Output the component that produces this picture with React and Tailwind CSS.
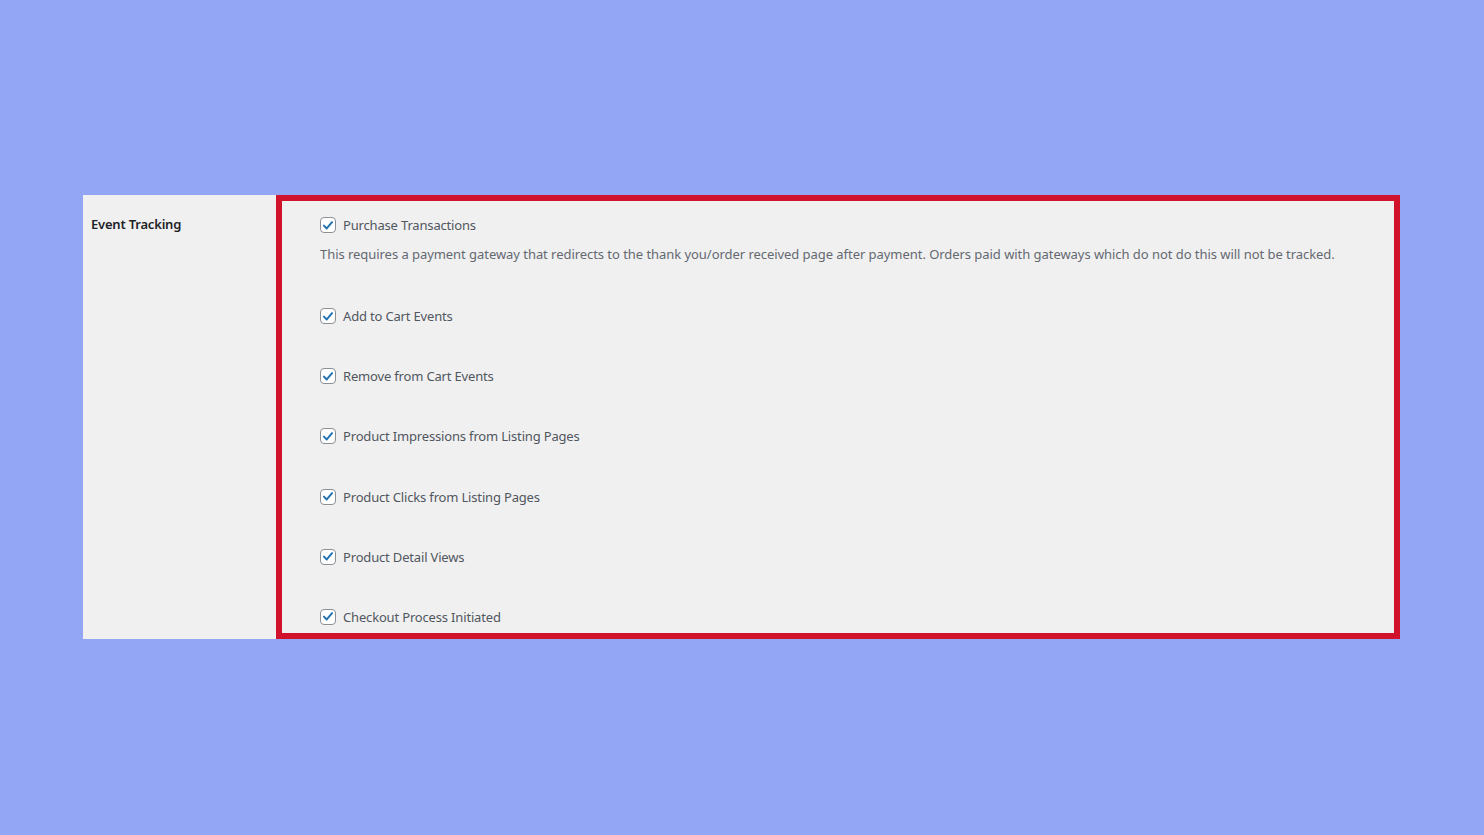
import React from 'react';

const events = [
  'Add to Cart Events',
  'Remove from Cart Events',
  'Product Impressions from Listing Pages',
  'Product Clicks from Listing Pages',
  'Product Detail Views',
  'Checkout Process Initiated',
];

const Check = () => (
  <span className="w-4 h-4 shrink-0 rounded-[4px] border border-[#8c8f94] bg-white flex items-center justify-center">
    <svg viewBox="0 0 20 20" className="w-[15px] h-[15px]">
      <path d="M4.2 10.2 L8.2 14.2 L15.8 5.2" fill="none" stroke="#2271b1" strokeWidth="2.8" strokeLinecap="round" strokeLinejoin="round" />
    </svg>
  </span>
);

const Row = ({ label }) => (
  <label className="flex items-center h-4 gap-[7px] text-[13px] tracking-[-0.17px] leading-5 text-[#50575e]">
    <Check />
    <span>{label}</span>
  </label>
);

export default function App() {
  return (
    <div className="min-h-[835px] bg-[#93a6f5] pt-[195px] pl-[83px]" style={{ fontFamily: '"Noto Sans", "Open Sans", sans-serif' }}>
      <div className="flex w-[1317px] h-[444px]">
        <div className="w-[193px] bg-[#f0f0f1] pl-2 pt-[19px]">
          <div className="text-[13px] tracking-[-0.2px] leading-5 font-semibold text-[#1d2327]">Event Tracking</div>
        </div>
        <div className="flex-1 bg-[#f0f0f1] border-[6px] border-[#d0132b] pl-[38px] pt-4">
          <Row label="Purchase Transactions" />
          <p className="mt-[11px] text-[13px] tracking-[-0.05px] leading-5 text-[#646970]">
            This requires a payment gateway that redirects to the thank you/order received page after payment. Orders paid with gateways which do not do this will not be tracked.
          </p>
          <div className="flex flex-col gap-[44.2px] mt-[44px]">
            {events.map((e) => (
              <Row key={e} label={e} />
            ))}
          </div>
        </div>
      </div>
    </div>
  );
}
